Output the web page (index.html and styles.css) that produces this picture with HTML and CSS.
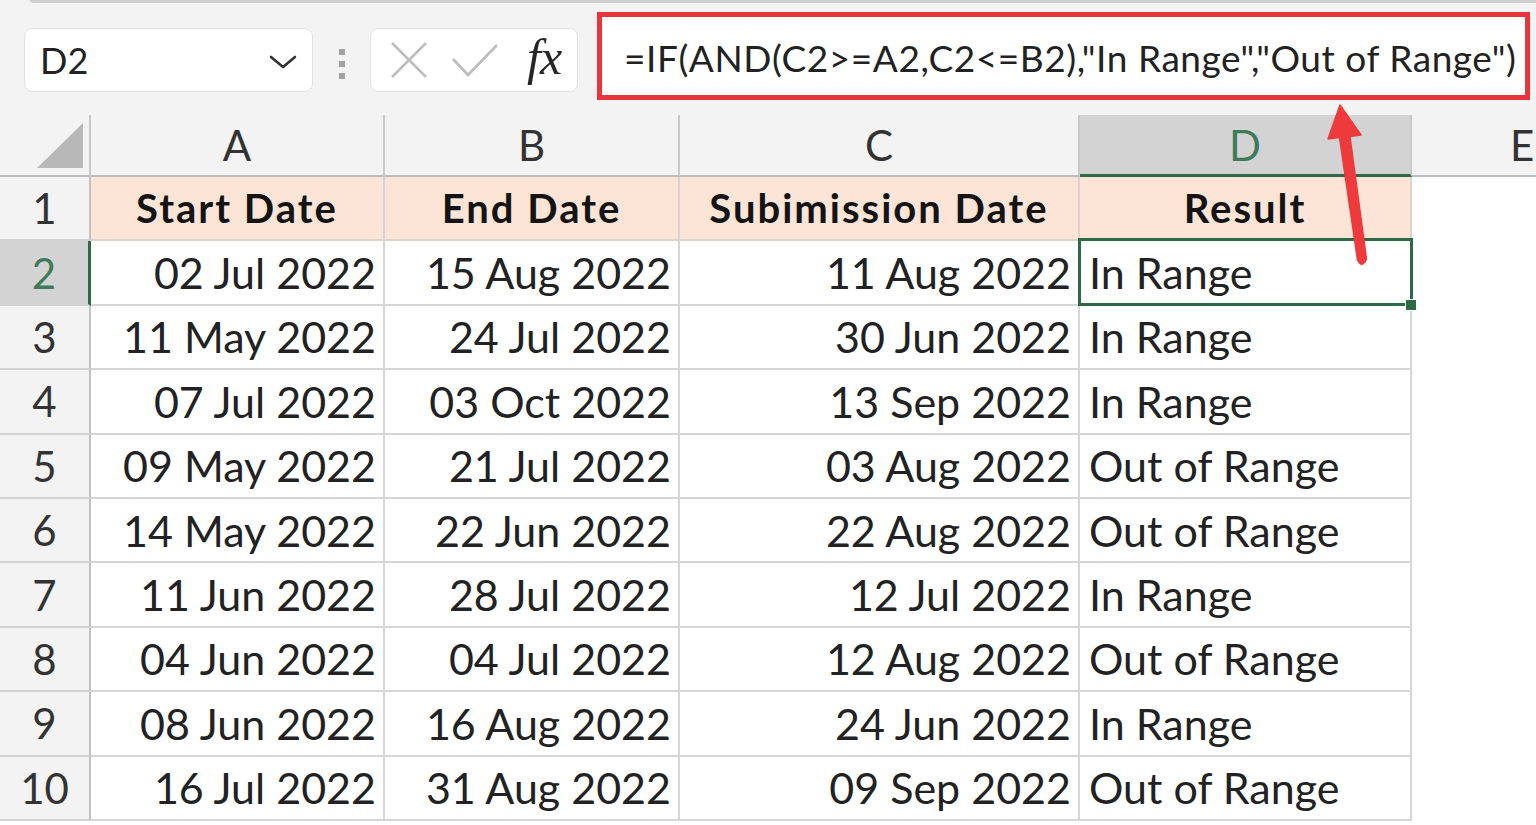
FILE: index.html
```html
<!DOCTYPE html>
<html>
<head>
<meta charset="utf-8">
<link rel="stylesheet" href="styles.css">
</head>
<body>
<div class="toolbar">
  <div class="ribbon-edge"></div>
  <div class="bar">
    <div class="namebox">
      <span class="name">D2</span>
      <svg class="chev" width="30" height="18" viewBox="0 0 30 18"><path d="M3 4 L15 14 L27 4" fill="none" stroke="#333" stroke-width="2.6" stroke-linecap="round" stroke-linejoin="round"/></svg>
    </div>
    <div class="dots"><span></span><span></span><span></span></div>
    <div class="fxbox">
      <svg class="ico" width="40" height="40" viewBox="0 0 40 40"><path d="M3 3 L37 37 M37 3 L3 37" fill="none" stroke="#bdbdbd" stroke-width="2.6"/></svg>
      <svg class="ico" width="48" height="36" viewBox="0 0 48 36"><path d="M2 17 L17 33 L46 3" fill="none" stroke="#bdbdbd" stroke-width="2.6"/></svg>
      <span class="fx">fx</span>
    </div>
    <div class="formula-frame">
      <div class="formula">=IF(AND(C2&gt;=A2,C2&lt;=B2),"In Range","Out of Range")</div>
    </div>
  </div>
</div>

<div class="sheet">
  <div class="ch corner"><div class="tri"></div></div>
  <div class="ch">A</div>
  <div class="ch">B</div>
  <div class="ch">C</div>
  <div class="ch sel">D</div>
  <div class="ch e">E</div>

  <div class="rh">1</div>
  <div class="hd">Start Date</div>
  <div class="hd">End Date</div>
  <div class="hd">Subimission Date</div>
  <div class="hd">Result</div>
  <div class="blank"></div>

  <div class="rh selr">2</div>
  <div class="c n">02 Jul 2022</div>
  <div class="c n">15 Aug 2022</div>
  <div class="c n">11 Aug 2022</div>
  <div class="c t active">In Range<span class="handle"></span></div>
  <div class="blank"></div>

  <div class="rh">3</div>
  <div class="c n">11 May 2022</div>
  <div class="c n">24 Jul 2022</div>
  <div class="c n">30 Jun 2022</div>
  <div class="c t">In Range</div>
  <div class="blank"></div>

  <div class="rh">4</div>
  <div class="c n">07 Jul 2022</div>
  <div class="c n">03 Oct 2022</div>
  <div class="c n">13 Sep 2022</div>
  <div class="c t">In Range</div>
  <div class="blank"></div>

  <div class="rh">5</div>
  <div class="c n">09 May 2022</div>
  <div class="c n">21 Jul 2022</div>
  <div class="c n">03 Aug 2022</div>
  <div class="c t">Out of Range</div>
  <div class="blank"></div>

  <div class="rh">6</div>
  <div class="c n">14 May 2022</div>
  <div class="c n">22 Jun 2022</div>
  <div class="c n">22 Aug 2022</div>
  <div class="c t">Out of Range</div>
  <div class="blank"></div>

  <div class="rh">7</div>
  <div class="c n">11 Jun 2022</div>
  <div class="c n">28 Jul 2022</div>
  <div class="c n">12 Jul 2022</div>
  <div class="c t">In Range</div>
  <div class="blank"></div>

  <div class="rh">8</div>
  <div class="c n">04 Jun 2022</div>
  <div class="c n">04 Jul 2022</div>
  <div class="c n">12 Aug 2022</div>
  <div class="c t">Out of Range</div>
  <div class="blank"></div>

  <div class="rh">9</div>
  <div class="c n">08 Jun 2022</div>
  <div class="c n">16 Aug 2022</div>
  <div class="c n">24 Jun 2022</div>
  <div class="c t">In Range</div>
  <div class="blank"></div>

  <div class="rh">10</div>
  <div class="c n">16 Jul 2022</div>
  <div class="c n">31 Aug 2022</div>
  <div class="c n">09 Sep 2022</div>
  <div class="c t">Out of Range</div>
  <div class="blank"></div>
</div>

<svg class="arrow" width="60" height="175" viewBox="0 0 60 175">
  <path d="M20 5 L8 39 L19.5 37.5 L37.5 160 Q42 169 46.5 159 L30 36.5 L41 35 Z" fill="#ee3a3d" stroke="#ee3a3d" stroke-width="1.5" stroke-linejoin="round"/>
</svg>
</body>
</html>
```

FILE: styles.css
```css
html, body {
  margin: 0;
  padding: 0;
}
body {
  width: 1536px;
  height: 825px;
  overflow: hidden;
  background: #ffffff;
  font-family: "Lato", "Liberation Sans", sans-serif;
  color: #1f1f1f;
  position: relative;
}
.toolbar {
  height: 115px;
  background: #f3f3f3;
  box-sizing: border-box;
}
.ribbon-edge {
  height: 3px;
  margin-left: 30px;
  background: #cfcfcf;
  border-bottom-left-radius: 3px;
}
.bar {
  display: flex;
  align-items: flex-start;
  padding-left: 24px;
}
.namebox {
  margin-top: 25px;
  width: 289px;
  height: 64px;
  box-sizing: border-box;
  background: #fff;
  border: 1px solid #e2e2e2;
  border-radius: 8px;
  display: flex;
  align-items: center;
  justify-content: space-between;
  padding: 0 14px 0 15px;
}
.name {
  font-size: 36px;
  color: #222;
}
.chev {
  margin-top: 4px;
}
.dots {
  margin: 46px 0 0 26px;
  width: 6px;
  display: flex;
  flex-direction: column;
  gap: 6px;
}
.dots span {
  width: 6px;
  height: 6px;
  background: #a4a4a4;
}
.fxbox {
  margin: 25px 0 0 25px;
  width: 208px;
  height: 64px;
  box-sizing: border-box;
  background: #fff;
  border: 1px solid #e2e2e2;
  border-radius: 8px;
  display: flex;
  align-items: center;
  padding: 0 0 0 18px;
  gap: 22px;
}
.fx {
  font-family: "Liberation Serif", "DejaVu Serif", serif;
  font-style: italic;
  font-size: 50px;
  color: #262626;
  margin-left: 6px;
  line-height: 1;
  margin-top: -6px;
  letter-spacing: -1px;
}
.formula-frame {
  margin: 9px 0 0 19px;
  width: 933px;
  height: 88px;
  box-sizing: border-box;
  border: 5px solid #e8343b;
  background: #fff;
  padding: 2px 0 0 22px;
  display: flex;
  align-items: center;
}
.formula {
  font-size: 37px;
  color: #222;
  white-space: nowrap;
  letter-spacing: 0.55px;
}

.sheet {
  display: grid;
  grid-template-columns: 91px 294px 295px 400px 332px 1fr;
  grid-template-rows: 62px repeat(10, 64.4px);
}
.sheet > div {
  box-sizing: border-box;
  display: flex;
  align-items: center;
  white-space: nowrap;
}
.ch {
  background: #f3f3f3;
  border-right: 2px solid #c9c9c9;
  border-bottom: 2px solid #bdbdbd;
  justify-content: center;
  font-size: 42px;
  color: #333;
}
.ch.sel {
  background: #d3d3d3;
  color: #3f7a5a;
  border-bottom: 3px solid #2c6b45;
}
.ch.e {
  justify-content: flex-start;
  padding-left: 98px;
  border-right: none;
}
.corner {
  position: relative;
}
.tri {
  position: absolute;
  left: 37px;
  top: 8px;
  width: 46px;
  height: 45px;
  background: #b8b8b8;
  clip-path: polygon(100% 0, 100% 100%, 0 100%);
}
.rh {
  background: #f3f3f3;
  border-right: 2px solid #c2c2c2;
  border-bottom: 2px solid #d2d2d2;
  justify-content: center;
  font-size: 42px;
  color: #333;
}
.rh.selr {
  background: #d3d3d3;
  color: #3f7a5a;
  border-right: 3px solid #2c6b45;
}
.hd {
  background: #fce4d6;
  border-right: 2px solid #d9d4d0;
  border-bottom: 2px solid #d9d4d0;
  justify-content: center;
  font-weight: 700;
  font-size: 40px;
  letter-spacing: 2px;
  color: #141414;
}
.c {
  background: #fff;
  border-right: 2px solid #d6d6d6;
  border-bottom: 2px solid #d6d6d6;
  font-size: 43px;
  color: #222;
}
.c.n {
  justify-content: flex-end;
  padding-right: 7px;
}
.c.t {
  justify-content: flex-start;
  padding-left: 9px;
}
.blank {
  background: #fff;
}
.active {
  position: relative;
}
.active::after {
  content: "";
  position: absolute;
  left: -2px;
  top: -3px;
  right: -3px;
  bottom: -2px;
  border: 3px solid #2c6b45;
}
.handle {
  position: absolute;
  right: -7px;
  bottom: -7px;
  width: 10px;
  height: 10px;
  background: #2c6b45;
  border: 1px solid #fff;
  z-index: 2;
}
.arrow {
  position: absolute;
  left: 1320px;
  top: 100px;
}
```
